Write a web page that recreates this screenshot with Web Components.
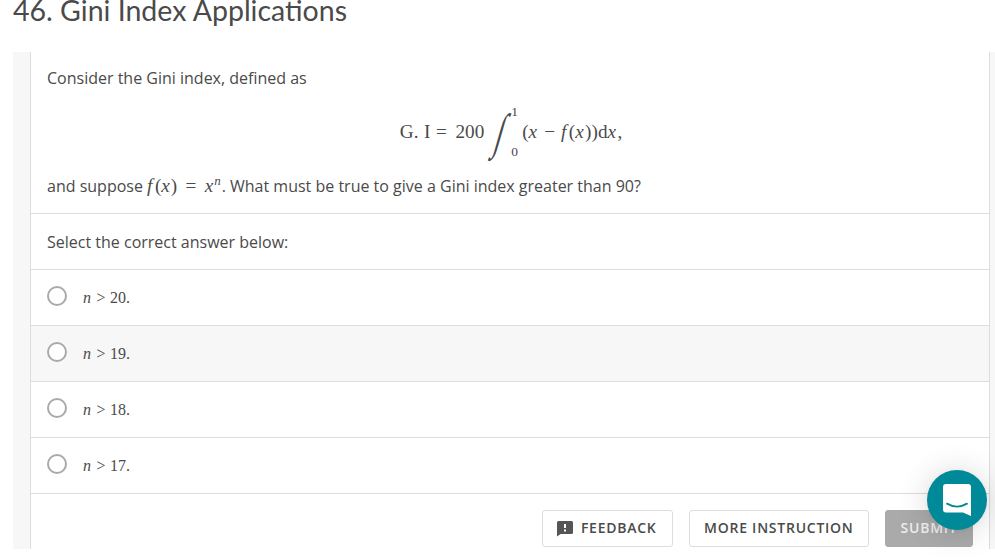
<!DOCTYPE html>
<html>
<head>
<meta charset="utf-8">
<title>Gini Index Applications</title>
<style>
  html, body { margin: 0; height: 559px; overflow: hidden; background: #fff; }
  body { font-family: "Open Sans", sans-serif; font-size: 16px; color: #4a4a4a; }
</style>
</head>
<body>
<quiz-page>
  <quiz-title slot="title">46. Gini Index Applications</quiz-title>
  <quiz-prompt slot="prompt"></quiz-prompt>
  <quiz-row slot="rows">Select the correct answer below:</quiz-row>
  <quiz-choice slot="rows" value="20"></quiz-choice>
  <quiz-choice slot="rows" value="19" hovered></quiz-choice>
  <quiz-choice slot="rows" value="18"></quiz-choice>
  <quiz-choice slot="rows" value="17"></quiz-choice>
  <quiz-actions slot="actions"></quiz-actions>
</quiz-page>
<chat-launcher></chat-launcher>

<script>
class QuizPage extends HTMLElement {
  connectedCallback() {
    this.attachShadow({ mode: 'open' }).innerHTML = `
      <style>
        :host { display: block; }
        .card {
          display: flex;
          height: 497px;
          margin: 0 0 0 13px;
          background: #f7f7f7;
          overflow: hidden;
        }
        .main {
          flex: 1;
          margin-left: 17px;
          margin-right: 5px;
          background: #fff;
          border-left: 1px solid #ddd;
          border-right: 1px solid #ddd;
        }
      </style>
      <slot name="title"></slot>
      <div class="card">
        <div class="main">
          <slot name="prompt"></slot>
          <slot name="rows"></slot>
          <slot name="actions"></slot>
        </div>
      </div>
    `;
  }
}

class QuizTitle extends HTMLElement {
  connectedCallback() {
    this.attachShadow({ mode: 'open' }).innerHTML = `
      <style>
        :host {
          display: flow-root;
          height: 52px;
          padding-left: 13px;
          font: 28.5px/30px Lato, sans-serif;
          color: #4a4a4a;
        }
        div { margin-top: -5px; }
      </style>
      <div><slot></slot></div>
    `;
  }
}

class QuizPrompt extends HTMLElement {
  connectedCallback() {
    this.attachShadow({ mode: 'open' }).innerHTML = `
      <style>
        :host {
          display: flex;
          flex-direction: column;
          height: 161px;
          padding: 0 16px;
          box-sizing: border-box;
          line-height: 24px;
        }
        p { margin: 0; }
        .first { padding-top: 14px; }
        .display {
          display: flex;
          justify-content: center;
          align-items: center;
          height: 66px;
          margin-top: 9px;
          padding-left: 2px;
          font: 19.2px/24px "Liberation Serif", serif;
        }
        .display .lhs { word-spacing: 0.8px; }
        .display .rhs { word-spacing: 1px; }
        .display i { margin-right: 1.4px; }
        .two { margin-left: 3px; }
        .sign {
          display: inline-block;
          width: 20px;
          margin: 0 0 0 7px;
          font-size: 49px;
          line-height: 50px;
          text-align: center;
          transform: skewX(-16deg) scaleX(.55);
        }
        .limits {
          display: flex;
          flex-direction: column;
          justify-content: space-between;
          height: 54px;
          width: 11px;
          font-size: 13.5px;
          line-height: 14px;
        }
        i { font-family: "Liberation Serif", serif; margin-right: 1px; }
        .display i.f, i.f { margin-right: 2.5px; }
        .last { margin-top: 9px; }
        .m { font-family: "Liberation Serif", serif; font-size: 19.2px; word-spacing: 3.5px; }
        sup { font-size: 13px; line-height: 0; }
      </style>
      <p class="first">Consider the Gini index, defined as</p>
      <div class="display">
        <span class="lhs">G. I = <span class="two">200</span></span>
        <span class="sign">∫</span>
        <span class="limits"><span>1</span><span>0</span></span>
        <span class="rhs">(<i>x</i> − <i class="f">f</i>(<i>x</i>))d<i>x</i>,</span>
      </div>
      <p class="last">and suppose <span class="m"><i class="f">f</i>(<i>x</i>) = <i>x</i><sup><i>n</i></sup></span>. What must be true to give a Gini index greater than 90?</p>
    `;
  }
}

class QuizRow extends HTMLElement {
  connectedCallback() {
    this.attachShadow({ mode: 'open' }).innerHTML = `
      <style>
        :host {
          display: flex;
          align-items: center;
          gap: 16px;
          height: 56px;
          box-sizing: border-box;
          padding: 0 16px;
          border-top: 1px solid #ddd;
          background: var(--row-bg, #fff);
        }
      </style>
      <slot></slot>
    `;
  }
}

class QuizChoice extends HTMLElement {
  connectedCallback() {
    const value = this.getAttribute('value');
    const bg = this.hasAttribute('hovered') ? '#f7f7f7' : '#fff';
    this.attachShadow({ mode: 'open' }).innerHTML = `
      <style>
        :host { display: block; --row-bg: ${bg}; }
        .radio {
          width: 20px;
          height: 20px;
          margin-bottom: 3px;
          box-sizing: border-box;
          border: 2px solid #aaa;
          border-radius: 50%;
          background: #fff;
        }
        .text { font: 16px "Liberation Serif", serif; word-spacing: 0.5px; }
        i { margin-right: 1px; }
      </style>
      <quiz-row>
        <span class="radio"></span>
        <span class="text"><i>n</i> &gt; ${value}.</span>
      </quiz-row>
    `;
  }
}

class QuizActions extends HTMLElement {
  connectedCallback() {
    this.attachShadow({ mode: 'open' }).innerHTML = `
      <style>
        :host {
          display: flex;
          justify-content: flex-end;
          gap: 16px;
          padding: 16px 16px 0;
          border-top: 1px solid #ddd;
        }
      </style>
      <quiz-button icon>FEEDBACK</quiz-button>
      <quiz-button>MORE INSTRUCTION</quiz-button>
      <quiz-button disabled>SUBMIT</quiz-button>
    `;
  }
}

class QuizButton extends HTMLElement {
  connectedCallback() {
    const icon = this.hasAttribute('icon') ? `
      <svg width="16" height="16" viewBox="0 0 16 16">
        <path d="M1.5 0h13A1.5 1.5 0 0 1 16 1.5v10a1.5 1.5 0 0 1-1.500 1.500H3.500L0 15.500V1.500A1.500 1.500 0 0 1 1.500 0z" fill="#555"/>
        <path d="M7 3h2v4H7zM7 8.500h2v2H7z" fill="#fff"/>
      </svg>` : '';
    const disabled = this.hasAttribute('disabled');
    this.attachShadow({ mode: 'open' }).innerHTML = `
      <style>
        :host {
          display: flex;
          align-items: center;
          gap: 8px;
          height: 37px;
          box-sizing: border-box;
          padding: 0 14.5px 2px;
          border: 1px solid ${disabled ? '#aaa' : '#ddd'};
          border-radius: 3px;
          background: ${disabled ? '#aaa' : '#fff'};
          color: ${disabled ? '#eee' : '#4a4a4a'};
          font: 600 14px "Open Sans", sans-serif;
          letter-spacing: 0.75px;
        }
        :host([icon]) { padding: 0 15px 2px 14px; }
        svg { margin-top: 2px; }
      </style>
      ${icon}<slot></slot>
    `;
  }
}

class ChatLauncher extends HTMLElement {
  connectedCallback() {
    this.attachShadow({ mode: 'open' }).innerHTML = `
      <style>
        :host {
          position: fixed;
          left: 927px;
          top: 470px;
          width: 60px;
          height: 60px;
          border-radius: 50%;
          background: #008a99;
          box-shadow: 0 1px 6px rgba(0,0,0,.06), 0 2px 32px rgba(0,0,0,.16);
          display: flex;
          align-items: center;
          justify-content: center;
        }
      </style>
      <svg width="28" height="32" viewBox="0 0 28 32">
        <path d="M3 0h22a3 3 0 0 1 3 3v29l-8-3.500H3a3 3 0 0 1-3-3V3a3 3 0 0 1 3-3z" fill="#fff"/>
        <path d="M4 19.600Q14 25.500 24 19.600" fill="none" stroke="#008a99" stroke-width="1.800" stroke-linecap="round"/>
      </svg>
    `;
  }
}

customElements.define('quiz-page', QuizPage);
customElements.define('quiz-title', QuizTitle);
customElements.define('quiz-prompt', QuizPrompt);
customElements.define('quiz-row', QuizRow);
customElements.define('quiz-choice', QuizChoice);
customElements.define('quiz-actions', QuizActions);
customElements.define('quiz-button', QuizButton);
customElements.define('chat-launcher', ChatLauncher);
</script>
</body>
</html>
